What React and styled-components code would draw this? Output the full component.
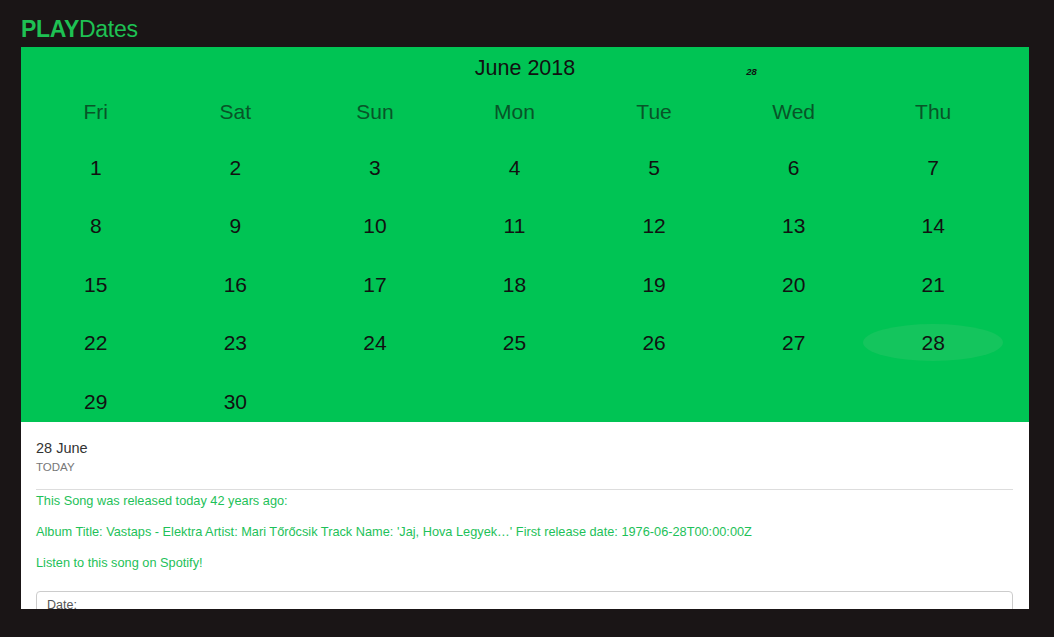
import React from "react";
import styled, { createGlobalStyle } from "styled-components";

const Global = createGlobalStyle`
  html, body { margin: 0; padding: 0; background: #1a1516; height: 100%; }
  body { font-family: "Liberation Sans", Arial, sans-serif; overflow: hidden; }
  #root { height: 100%; }
`;

const Page = styled.div`
  height: 637px;
  box-sizing: border-box;
  padding: 0 25px 28px 21px;
  display: flex;
  flex-direction: column;
`;

const Header = styled.header`
  height: 47px;
  box-sizing: border-box;
  padding-top: 16px;
  flex-shrink: 0;
`;

const Logo = styled.h1`
  margin: 0;
  font-size: 23px;
  line-height: 26px;
  font-weight: 400;
  color: #1ec153;
  letter-spacing: -0.3px;
  b { font-weight: 700; }
`;

const Calendar = styled.section`
  background: #00c454;
  padding: 10px 26px 2px 5px;
  flex-shrink: 0;
`;

const MonthRow = styled.div`
  display: grid;
  grid-template-columns: 1fr auto 1fr;
  align-items: center;
  height: 22px;
  margin-left: -5px;
  margin-right: -26px;
`;

const MonthTitle = styled.div`
  grid-column: 2;
  font-size: 21.5px;
  line-height: 22px;
  color: #111;
`;

const SelectedTag = styled.span`
  grid-column: 3;
  justify-self: start;
  margin-left: 171px;
  margin-top: 6px;
  font-size: 9.5px;
  font-style: italic;
  font-weight: 700;
  color: #111;
`;

const WeekRow = styled.div`
  display: grid;
  grid-template-columns: repeat(7, 1fr);
  margin-top: 13px;
  height: 40px;
`;

const WeekDay = styled.div`
  text-align: center;
  font-size: 21px;
  line-height: 40px;
  color: #085528;
`;

const DaysGrid = styled.div`
  display: grid;
  grid-template-columns: repeat(7, 1fr);
  grid-auto-rows: 37px;
  row-gap: 21.6px;
  margin-top: 16.5px;
`;

const Day = styled.div`
  text-align: center;
  font-size: 21px;
  line-height: 37px;
  color: #111;
  border-radius: 50%;
  background: ${(p) => (p.$today ? "#14c55d" : "transparent")};
`;

const Details = styled.section`
  background: #fff;
  flex: 1;
  overflow: hidden;
  padding: 16px 16px 0 15px;
`;

const DateTitle = styled.div`
  font-size: 14.5px;
  line-height: 20px;
  color: #333;
`;

const Sub = styled.div`
  margin-top: 2px;
  font-size: 11.5px;
  line-height: 14px;
  color: #777;
  text-transform: uppercase;
`;

const Rule = styled.hr`
  margin: 15.5px 0 1.5px;
  border: 0;
  border-top: 1px solid #ddd;
`;

const Line = styled.p`
  margin: 0 0 14px;
  font-size: 12.75px;
  line-height: 17px;
  color: #1ec159;
`;

const InputBox = styled.div`
  margin-top: 20.5px;
  border: 1px solid #ccc;
  border-radius: 4px;
  padding: 5px 10px;
  height: 40px;
  font-size: 12.5px;
  line-height: 16px;
  color: #555;
`;

const weekdays = ["Fri", "Sat", "Sun", "Mon", "Tue", "Wed", "Thu"];
const days = Array.from({ length: 30 }, (_, i) => i + 1);

export default function App() {
  return (
    <>
      <Global />
      <Page>
        <Header>
          <Logo>
            <b>PLAY</b>Dates
          </Logo>
        </Header>
        <Calendar>
          <MonthRow>
            <MonthTitle>June 2018</MonthTitle>
            <SelectedTag>28</SelectedTag>
          </MonthRow>
          <WeekRow>
            {weekdays.map((d) => (
              <WeekDay key={d}>{d}</WeekDay>
            ))}
          </WeekRow>
          <DaysGrid>
            {days.map((d) => (
              <Day key={d} $today={d === 28}>
                {d}
              </Day>
            ))}
          </DaysGrid>
        </Calendar>
        <Details>
          <DateTitle>28 June</DateTitle>
          <Sub>Today</Sub>
          <Rule />
          <Line>This Song was released today 42 years ago:</Line>
          <Line>
            Album Title: Vastaps - Elektra Artist: Mari Tőrőcsik Track Name: 'Jaj, Hova Legyek…' First release date: 1976-06-28T00:00:00Z
          </Line>
          <Line>Listen to this song on Spotify!</Line>
          <InputBox>Date:</InputBox>
        </Details>
      </Page>
    </>
  );
}
